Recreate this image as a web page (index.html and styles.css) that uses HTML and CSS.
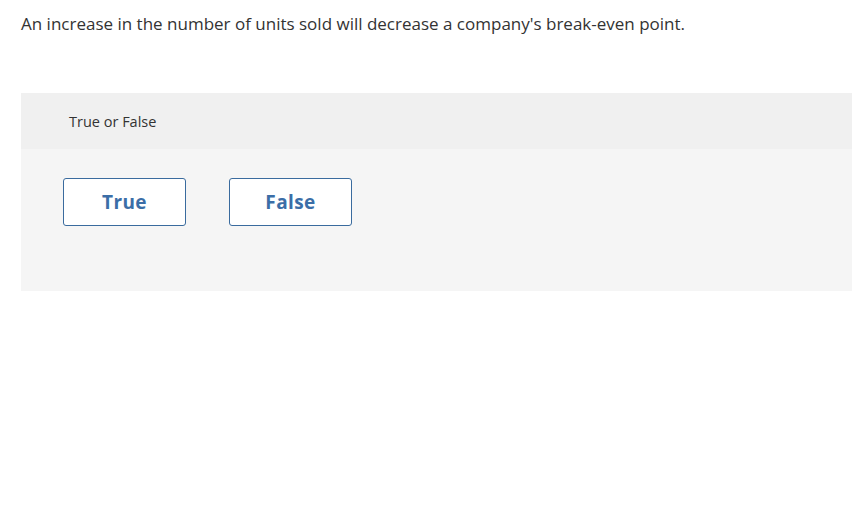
FILE: index.html
```html
<!DOCTYPE html>
<html>
<head>
<meta charset="utf-8">
<link rel="stylesheet" href="styles.css">
</head>
<body>
<p class="question">An increase in the number of units sold will decrease a company's break-even point.</p>
<section class="panel">
  <div class="panel-header">True or False</div>
  <div class="panel-body">
    <button class="choice">True</button>
    <button class="choice">False</button>
  </div>
</section>
</body>
</html>
```
FILE: styles.css
```css
html, body {
  margin: 0;
  padding: 0;
  background: #ffffff;
}
body {
  font-family: "Open Sans", "Liberation Sans", sans-serif;
  color: #333333;
  overflow: hidden;
}
.question {
  margin: 0;
  padding: 12px 0 0 21px;
  font-size: 17px;
  line-height: 24px;
  color: #333333;
}
.panel {
  margin: 57px 0 0 21px;
  background: #f5f5f5;
  height: 198px;
}
.panel-header {
  background: #f0f0f0;
  height: 56px;
  padding-left: 48px;
  display: flex;
  align-items: center;
  font-size: 14.5px;
  color: #333333;
}
.panel-body {
  display: flex;
  gap: 43px;
  padding: 29px 0 0 42px;
}
.choice {
  width: 123px;
  height: 48px;
  background: #ffffff;
  border: 1px solid #3a6b9e;
  border-radius: 3px;
  font-family: "Open Sans", "Liberation Sans", sans-serif;
  font-weight: 700;
  font-size: 19px;
  letter-spacing: 0.4px;
  color: #3b6ea7;
  padding: 0 0 1px 0;
}
```
